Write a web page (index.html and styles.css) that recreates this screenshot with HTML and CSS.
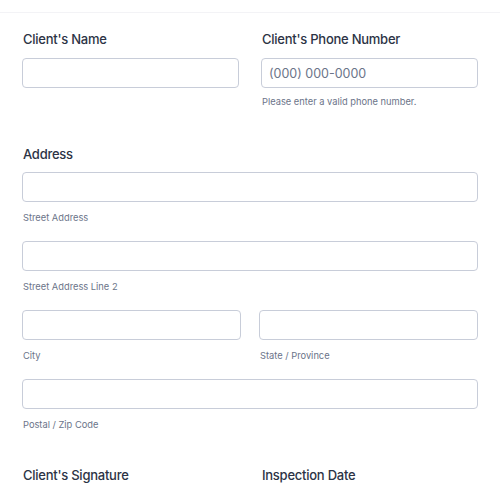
FILE: index.html
```html
<!DOCTYPE html>
<html>
<head>
<meta charset="utf-8">
<link rel="stylesheet" href="styles.css">
</head>
<body>
<div class="form">
  <div class="row two">
    <div class="field">
      <div class="label">Client's Name</div>
      <div class="input"></div>
    </div>
    <div class="field">
      <div class="label">Client's Phone Number</div>
      <div class="input"><span class="ph">(000) 000-0000</span></div>
      <div class="help">Please enter a valid phone number.</div>
    </div>
  </div>
  <div class="address">
    <div class="label">Address</div>
    <div class="sub">
      <div class="input"></div>
      <div class="sublabel">Street Address</div>
    </div>
    <div class="sub">
      <div class="input"></div>
      <div class="sublabel">Street Address Line 2</div>
    </div>
    <div class="sub split">
      <div>
        <div class="input"></div>
        <div class="sublabel">City</div>
      </div>
      <div>
        <div class="input"></div>
        <div class="sublabel">State / Province</div>
      </div>
    </div>
    <div class="sub">
      <div class="input"></div>
      <div class="sublabel">Postal / Zip Code</div>
    </div>
  </div>
  <div class="row two bottom">
    <div class="field"><div class="label">Client's Signature</div></div>
    <div class="field"><div class="label">Inspection Date</div></div>
  </div>
</div>
</body>
</html>
```
FILE: styles.css
```css
* { box-sizing: border-box; }
html, body { margin: 0; padding: 0; background: #fff; }
body { font-family: Inter, "Noto Sans", sans-serif; color: #2c3345; }
.form {
  margin-top: 12px;
  border-top: 1px solid #f3f3f6;
  padding: 0 22px 0 22px;
}
.row.two {
  display: grid;
  grid-template-columns: 217px 217px;
  column-gap: 22px;
  padding-top: 17px;
}
.label {
  font-size: 13px;
  font-weight: 500;
  letter-spacing: -0.25px;
  line-height: 18px;
  height: 18px;
  margin-bottom: 10px;
  padding-left: 1px;
  color: #2c3345;
}
.input {
  height: 30px;
  border: 1px solid #c8cdd9;
  border-radius: 4px;
  background: #fff;
  display: flex;
  align-items: center;
  padding: 0 7px;
}
.ph { font-size: 12.5px; color: #6b7489; }
.help, .sublabel {
  font-size: 9.3px;
  color: #6b7489;
  margin-top: 10px;
  line-height: 12px;
  padding-left: 1px;
}
.help { margin-top: 8px; }
.address { padding-top: 37px; }
.address .label { margin-bottom: 9px; }
.sub { margin-bottom: 17px; }
.split {
  display: grid;
  grid-template-columns: 219px 219px;
  column-gap: 18px;
}
.row.bottom { padding-top: 18px; }
```
